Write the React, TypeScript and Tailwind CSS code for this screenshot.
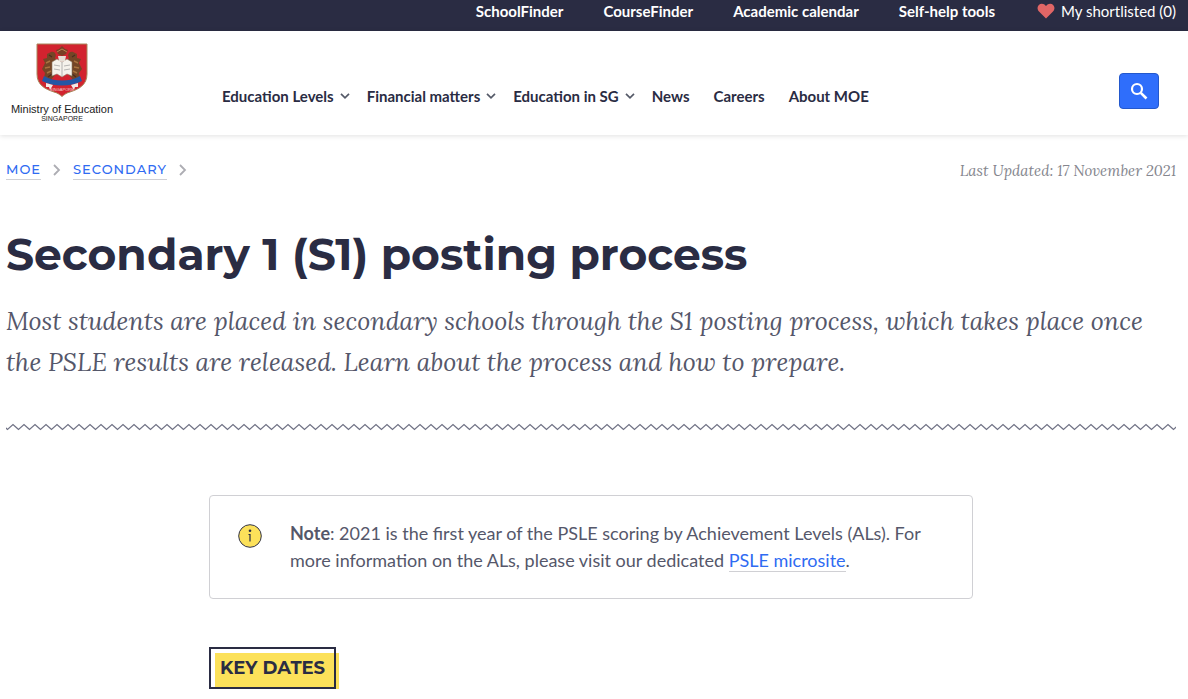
const topLinks = ['SchoolFinder', 'CourseFinder', 'Academic calendar', 'Self-help tools'];

const navItems = [
  { label: 'Education Levels', menu: true },
  { label: 'Financial matters', menu: true },
  { label: 'Education in SG', menu: true },
  { label: 'News', menu: false },
  { label: 'Careers', menu: false },
  { label: 'About MOE', menu: false },
];

const crumbs = ['MOE', 'SECONDARY'];

function Crest() {
  return (
    <svg viewBox="0 0 52 54" className="h-[54px] w-[52px]" aria-hidden="true">
      <path d="M1 1H51V31C51 42 43 46 34 49C30 50 28 52 26 53.500C24 52 22 50 18 49C9 46 1 42 1 31Z" fill="#d2232f" stroke="#a8875c" />
      {/* lion and tiger supporters */}
      <path d="M15 9C19 8 21 12 19 15L21 18L18 21L19 32L14 38L8 35L9 30L6 26L9 20L7 16L11 15L11 11Z" fill="#744526" />
      <path d="M37 9C33 8 31 12 33 15L31 18L34 21L33 32L38 38L44 35L43 30L46 26L43 20L45 16L41 15L41 11Z" fill="#744526" />
      <path d="M10 20L14 18M9 25L14 24M11 30L15 28M42 20L38 18M43 25L38 24M41 30L37 28" stroke="#a9733f" strokeWidth="1.5" />
      <path d="M13 12L16 14M39 12L36 14M12 34L16 31M40 34L36 31" stroke="#4a2d1f" strokeWidth="1.2" />
      <path d="M20 7L23 6L26 3L29 6L32 7L30 11L26 13L22 11Z" fill="#7a3f25" />
      <path d="M21 9L26 6L31 9" fill="none" stroke="#b98350" />
      {/* open book */}
      <path d="M16 19L21 16L26 19L31 16L36 19V33L31 31L26 34L21 31L16 33Z" fill="#f5f2ec" stroke="#8b7a66" strokeWidth="0.6" />
      <path d="M26 19V33M18 22L24 23M18 26L24 27M28 23L34 22M28 27L34 26" stroke="#9a9a9a" strokeWidth="0.7" />
      <path d="M22 13H30L29 18L26 19L23 18Z" fill="#e5ded5" />
      {/* ribbon */}
      <path d="M8 33C18 39 34 39 44 33L46 38C34 44 18 44 6 38Z" fill="#2456a4" />
      <path d="M10 40L17 42L14 47L13 44L10 44ZM42 40L35 42L38 47L39 44L42 44Z" fill="#f3e9e6" />
      <text x="26" y="48" fontSize="4" textAnchor="middle" fill="#f3d3d0" className="font-['Liberation_Sans',sans-serif]">SINGAPORE</text>
    </svg>
  );
}

function ChevronDown() {
  return (
    <svg viewBox="0 0 10 6" className="h-[6px] w-[10px]" fill="none" stroke="#555a68" strokeWidth="1.7" aria-hidden="true">
      <path d="M1 0.800L5 4.800L9 0.800" />
    </svg>
  );
}

function ChevronRight() {
  return (
    <svg viewBox="0 0 8 12" className="h-3 w-2" fill="none" stroke="#adadb3" strokeWidth="1.8" aria-hidden="true">
      <path d="M1 1L6 6L1 11" />
    </svg>
  );
}

function ZigZag() {
  return (
    <svg className="mt-10 block h-2 w-full" aria-hidden="true">
      <defs>
        <pattern id="zigzag" width="11" height="8" patternUnits="userSpaceOnUse">
          <path d="M-4 1.500L1.500 6.500L7 1.500L12.500 6.500" fill="none" stroke="#6f7184" strokeWidth="1.200" />
        </pattern>
      </defs>
      <rect width="100%" height="8" fill="url(#zigzag)" />
    </svg>
  );
}

export default function App() {
  return (
    <div className="bg-white font-[Lato,sans-serif] text-[#2a2c43]">
      <div className="flex h-[31px] items-start justify-end bg-[#2a2c43] pr-3 text-[15px] leading-[22px] text-white">
        <nav className="flex gap-10 font-bold">
          {topLinks.map((label) => (
            <a key={label} href="#">{label}</a>
          ))}
        </nav>
        <a href="#" className="ml-[42px] flex items-center gap-[6px]">
          <svg viewBox="0 0 18 16" className="h-4 w-[18px]" fill="#e06666" aria-hidden="true">
            <path d="M9 15.500L2 8.500C-2 4 3-1.500 7.500 1.500L9 3L10.500 1.500C15-1.500 20 4 16 8.500Z" />
          </svg>
          My shortlisted (0)
        </a>
      </div>

      <header className="flex h-[104px] items-start pr-[29px] pl-3 shadow-[0_1px_5px_rgba(0,0,0,0.12)]">
        <a href="#" className="mt-3 flex w-[100px] flex-col items-center font-['Liberation_Sans',sans-serif] text-[#222]">
          <Crest />
          <span className="mt-1 text-[11px] leading-4 whitespace-nowrap">Ministry of Education</span>
          <span className="text-[7px] leading-1">SINGAPORE</span>
        </a>
        <nav className="mt-[53px] ml-[110px] flex text-[15px] leading-6 font-bold whitespace-nowrap">
          {navItems.map((item) =>
            item.menu ? (
              <button key={item.label} type="button" className="mr-[17px] flex items-center gap-[6px]">
                {item.label}
                <ChevronDown />
              </button>
            ) : (
              <a key={item.label} href="#" className="mr-6">{item.label}</a>
            )
          )}
        </nav>
        <button type="button" aria-label="Search" className="mt-[42px] ml-auto flex h-9 w-10 items-center justify-center rounded-sm border border-[#2358cc] bg-[#2f6efb]">
          <svg viewBox="0 0 18 18" className="size-[18px]" fill="none" stroke="#fff" aria-hidden="true">
            <circle cx="7" cy="7" r="5" strokeWidth="2.2" />
            <path d="M10.800 10.800L16.500 16.500" strokeWidth="2.600" />
          </svg>
        </button>
      </header>

      <main className="pr-3 pl-[6px]">
        <div className="flex items-start justify-between pt-6">
          <nav aria-label="Breadcrumb" className="flex items-center font-[Montserrat,sans-serif] text-[13px] leading-5 font-medium tracking-[1px] text-[#2f6bf2]">
            {crumbs.map((label) => (
              <span key={label} className="flex items-center">
                <a href="#" className="border-b border-[#d0d0d4]">{label}</a>
                <span className="mx-3"><ChevronRight /></span>
              </span>
            ))}
          </nav>
          <p className="font-[Lora,serif] text-[15px] leading-6 text-[#85868e] italic">Last Updated: 17 November 2021</p>
        </div>

        <h1 className="mt-[41px] font-[Montserrat,sans-serif] text-[44px] leading-[60px] font-bold">Secondary 1 (S1) posting process</h1>
        <p className="mt-[17px] font-[Lora,serif] text-[25px] leading-[41px] text-[#55576a] italic">
          Most students are placed in secondary schools through the S1 posting process, which takes place once the PSLE results are released. Learn about the process and how to prepare.
        </p>
        <ZigZag />

        <div className="mx-auto max-w-[764px]">
          <div className="mt-16 flex items-start rounded-sm border border-[#d0d0d4] px-7 py-6">
            <svg viewBox="0 0 24 24" className="mt-1 size-6 shrink-0" aria-hidden="true">
              <circle cx="12" cy="12" r="11.300" fill="#fce15a" stroke="#33354a" />
              <path d="M10.500 10.500H12V17.500" fill="none" stroke="#2a2c43" strokeWidth="1.200" />
              <circle cx="12" cy="6.800" r="1.300" fill="#2a2c43" />
            </svg>
            <p className="ml-7 text-[18px] leading-[27px] text-[#55576a]">
              <strong>Note</strong>: 2021 is the first year of the PSLE scoring by Achievement Levels (ALs). For more information on the ALs, please visit our dedicated{' '}
              <a href="#" className="border-b border-[#d0d0d4] text-[#2f6bf2]">PSLE microsite</a>.
            </p>
          </div>

          {/* the yellow block sits behind the outline, shifted down and right */}
          <h2 className="relative mt-12 w-fit font-[Montserrat,sans-serif] text-[18px] leading-[38px] font-bold before:absolute before:top-[6px] before:-right-[3px] before:-bottom-[3px] before:left-[6px] before:bg-[#fce15a]">
            <span className="relative block border-2 border-[#2a2c43] px-[9px]">KEY DATES</span>
          </h2>
        </div>
      </main>
    </div>
  );
}
